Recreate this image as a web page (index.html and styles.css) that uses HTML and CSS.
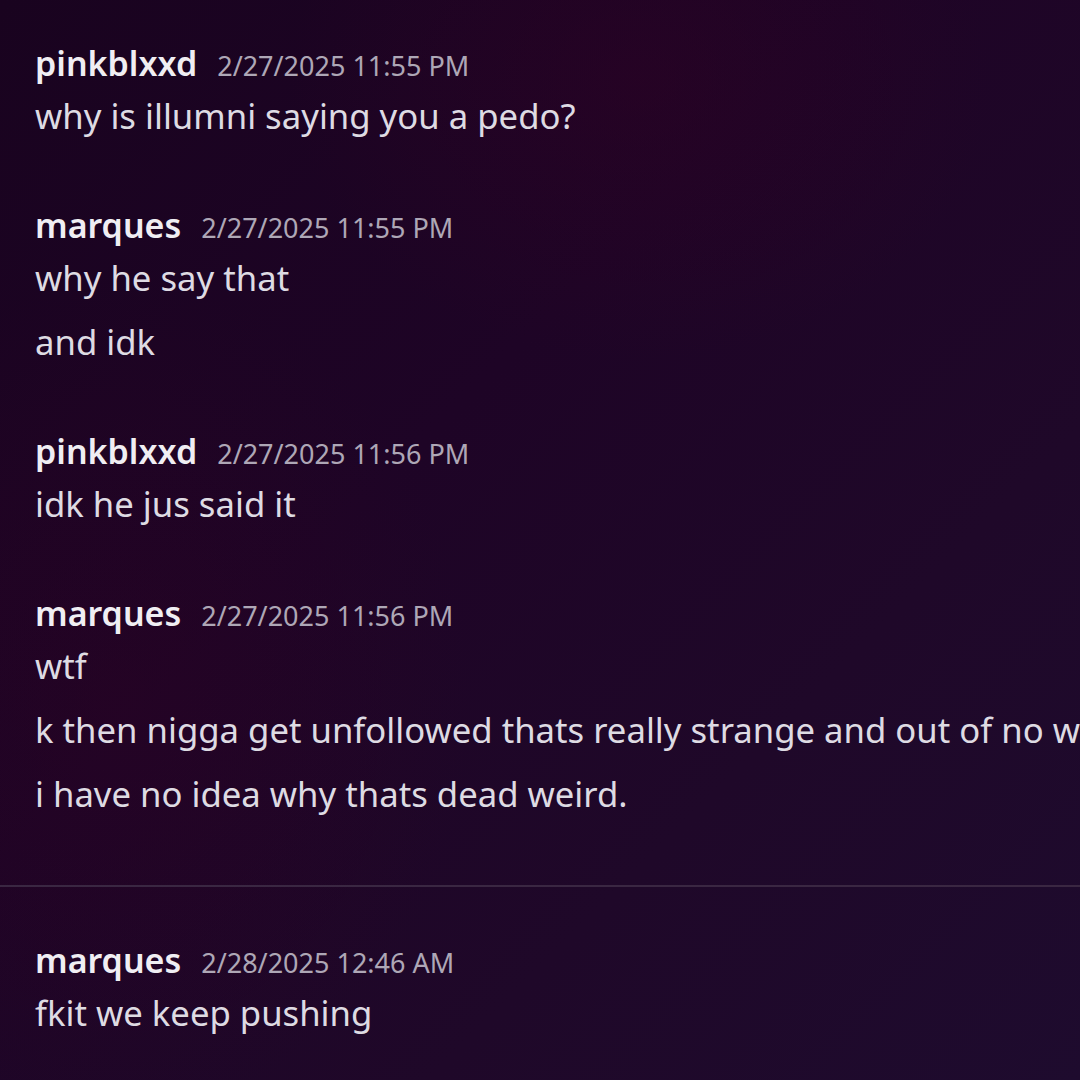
FILE: index.html
```html
<!DOCTYPE html>
<html>
<head>
<meta charset="utf-8">
<link rel="stylesheet" href="styles.css">
</head>
<body>
<div class="chat">
  <div class="group g1">
    <div class="header"><span class="name">pinkblxxd</span><span class="time">2/27/2025 11:55 PM</span></div>
    <div class="msg">why is illumni saying you a pedo?</div>
  </div>
  <div class="group">
    <div class="header"><span class="name">marques</span><span class="time">2/27/2025 11:55 PM</span></div>
    <div class="msg">why he say that</div>
    <div class="msg">and idk</div>
  </div>
  <div class="group">
    <div class="header"><span class="name">pinkblxxd</span><span class="time">2/27/2025 11:56 PM</span></div>
    <div class="msg">idk he jus said it</div>
  </div>
  <div class="group">
    <div class="header"><span class="name">marques</span><span class="time">2/27/2025 11:56 PM</span></div>
    <div class="msg">wtf</div>
    <div class="msg clip">k then nigga get unfollowed thats really strange and out of no where</div>
    <div class="msg">i have no idea why thats dead weird.</div>
  </div>
  <div class="divider"></div>
  <div class="group g5">
    <div class="header"><span class="name">marques</span><span class="time">2/28/2025 12:46 AM</span></div>
    <div class="msg">fkit we keep pushing</div>
  </div>
</div>
</body>
</html>
```
FILE: styles.css
```css
html, body {
  margin: 0;
  padding: 0;
  width: 1080px;
  height: 1080px;
  overflow: hidden;
}
body {
  background:
    radial-gradient(ellipse 500px 400px at 640px 80px, rgba(48, 2, 36, 0.45), rgba(48, 2, 36, 0) 70%),
    radial-gradient(ellipse 500px 600px at 120px 700px, rgba(45, 2, 35, 0.4), rgba(45, 2, 35, 0) 70%),
    linear-gradient(135deg, #19031f 0%, #1e0426 40%, #1f0829 70%, #1e0b2e 100%);
  font-family: "Noto Sans", "Open Sans", sans-serif;
}
.chat {
  display: flex;
  flex-direction: column;
  padding-left: 35px;
  padding-top: 42px;
  width: 1045px;
  overflow: hidden;
}
.group {
  display: flex;
  flex-direction: column;
  margin-bottom: 56px;
}
.header {
  display: flex;
  align-items: baseline;
  gap: 20px;
  height: 42px;
  line-height: 42px;
}
.name {
  font-size: 34px;
  font-weight: 600;
  color: #f0eef3;
}
.time {
  font-size: 27px;
  color: #aea7b6;
}
.msg {
  font-size: 34.7px;
  line-height: 64px;
  color: #dedbe3;
  white-space: nowrap;
}
.clip {
  overflow: hidden;
  text-overflow: clip;
}
.divider {
  height: 2px;
  background: #3a2742;
  margin-top: 3px;
  margin-left: -35px;
  margin-bottom: 52px;
}
```
